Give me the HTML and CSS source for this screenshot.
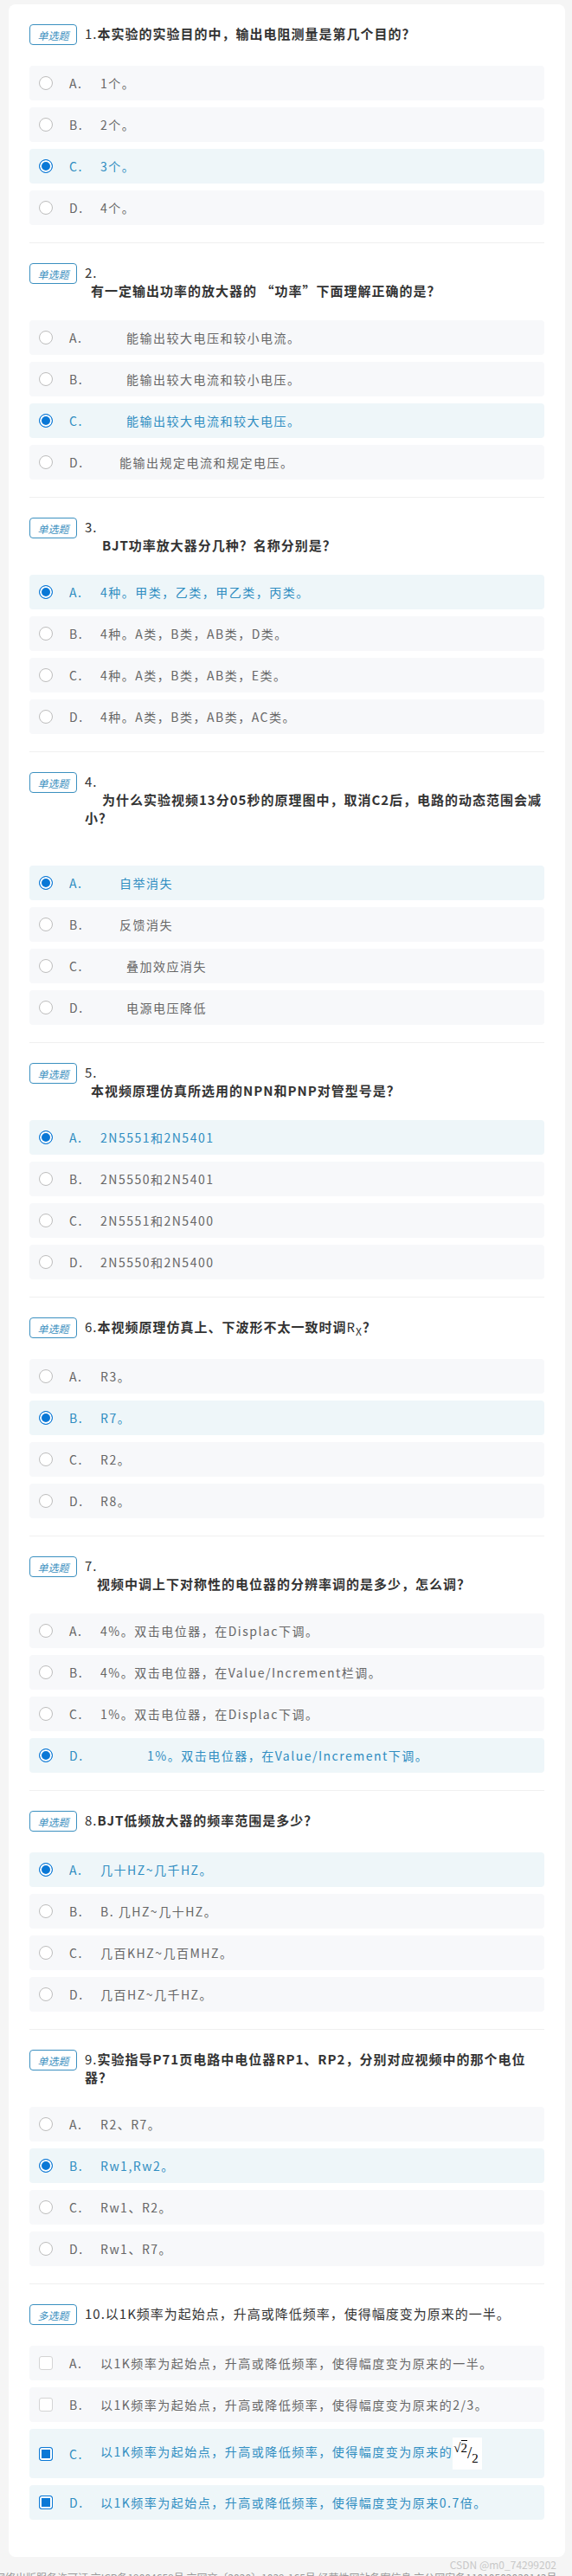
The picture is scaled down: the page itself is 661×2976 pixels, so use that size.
FILE: index.html
```html
<!DOCTYPE html>
<html lang="zh-CN">
  <head>
    <meta charset="UTF-8" />
    <meta name="viewport" content="width=device-width, initial-scale=1.0" />
    <title>课后测验</title>
    <link rel="stylesheet" href="styles.css">
  </head>
  <body>
    <div class="paper">
      <!-- 1 -->
      <div class="question">
        <div class="q-head">
          <span class="q-type">单选题</span>
          <div class="q-title"><p>1.<strong>本实验的实验目的中，输出电阻测量是第几个目的？</strong></p></div>
        </div>
        <ul class="options">
          <li class="option"><span class="radio"></span><span class="opt-key">A.</span><span class="opt-text">1个。</span></li>
          <li class="option"><span class="radio"></span><span class="opt-key">B.</span><span class="opt-text">2个。</span></li>
          <li class="option checked"><span class="radio"></span><span class="opt-key">C.</span><span class="opt-text">3个。</span></li>
          <li class="option"><span class="radio"></span><span class="opt-key">D.</span><span class="opt-text">4个。</span></li>
        </ul>
      </div>

      <!-- 2 -->
      <div class="question">
        <div class="q-head">
          <span class="q-type">单选题</span>
          <div class="q-title">
            <p>2.</p>
            <p class="indent-1"><strong>有一定输出功率的放大器的 “功率”下面理解正确的是？</strong></p>
          </div>
        </div>
        <ul class="options">
          <li class="option"><span class="radio"></span><span class="opt-key">A.</span><span class="opt-text lead-b">能输出较大电压和较小电流。</span></li>
          <li class="option"><span class="radio"></span><span class="opt-key">B.</span><span class="opt-text lead-b">能输出较大电流和较小电压。</span></li>
          <li class="option checked"><span class="radio"></span><span class="opt-key">C.</span><span class="opt-text lead-b">能输出较大电流和较大电压。</span></li>
          <li class="option"><span class="radio"></span><span class="opt-key">D.</span><span class="opt-text lead-a">能输出规定电流和规定电压。</span></li>
        </ul>
      </div>

      <!-- 3 -->
      <div class="question">
        <div class="q-head">
          <span class="q-type">单选题</span>
          <div class="q-title">
            <p>3.</p>
            <p class="indent-3"><strong>BJT功率放大器分几种？名称分别是？</strong></p>
          </div>
        </div>
        <ul class="options">
          <li class="option checked"><span class="radio"></span><span class="opt-key">A.</span><span class="opt-text">4种。甲类，乙类，甲乙类，丙类。</span></li>
          <li class="option"><span class="radio"></span><span class="opt-key">B.</span><span class="opt-text">4种。A类，B类，AB类，D类。</span></li>
          <li class="option"><span class="radio"></span><span class="opt-key">C.</span><span class="opt-text">4种。A类，B类，AB类，E类。</span></li>
          <li class="option"><span class="radio"></span><span class="opt-key">D.</span><span class="opt-text">4种。A类，B类，AB类，AC类。</span></li>
        </ul>
      </div>

      <!-- 4 -->
      <div class="question">
        <div class="q-head">
          <span class="q-type">单选题</span>
          <div class="q-title">
            <p>4.</p>
            <p class="indent-3"><strong>为什么实验视频13分05秒的原理图中，取消C2后，电路的动态范围会减<br>小？</strong></p>
            <p><br></p>
          </div>
        </div>
        <ul class="options">
          <li class="option checked"><span class="radio"></span><span class="opt-key">A.</span><span class="opt-text lead-a">自举消失</span></li>
          <li class="option"><span class="radio"></span><span class="opt-key">B.</span><span class="opt-text lead-a">反馈消失</span></li>
          <li class="option"><span class="radio"></span><span class="opt-key">C.</span><span class="opt-text lead-b">叠加效应消失</span></li>
          <li class="option"><span class="radio"></span><span class="opt-key">D.</span><span class="opt-text lead-b">电源电压降低</span></li>
        </ul>
      </div>

      <!-- 5 -->
      <div class="question">
        <div class="q-head">
          <span class="q-type">单选题</span>
          <div class="q-title">
            <p>5.</p>
            <p class="indent-1"><strong>本视频原理仿真所选用的NPN和PNP对管型号是？</strong></p>
          </div>
        </div>
        <ul class="options">
          <li class="option checked"><span class="radio"></span><span class="opt-key">A.</span><span class="opt-text">2N5551和2N5401</span></li>
          <li class="option"><span class="radio"></span><span class="opt-key">B.</span><span class="opt-text">2N5550和2N5401</span></li>
          <li class="option"><span class="radio"></span><span class="opt-key">C.</span><span class="opt-text">2N5551和2N5400</span></li>
          <li class="option"><span class="radio"></span><span class="opt-key">D.</span><span class="opt-text">2N5550和2N5400</span></li>
        </ul>
      </div>

      <!-- 6 -->
      <div class="question">
        <div class="q-head">
          <span class="q-type">单选题</span>
          <div class="q-title"><p>6.<strong>本视频原理仿真上、下波形不太一致时调</strong>R<sub>X</sub><strong>？</strong></p></div>
        </div>
        <ul class="options">
          <li class="option"><span class="radio"></span><span class="opt-key">A.</span><span class="opt-text">R3。</span></li>
          <li class="option checked"><span class="radio"></span><span class="opt-key">B.</span><span class="opt-text">R7。</span></li>
          <li class="option"><span class="radio"></span><span class="opt-key">C.</span><span class="opt-text">R2。</span></li>
          <li class="option"><span class="radio"></span><span class="opt-key">D.</span><span class="opt-text">R8。</span></li>
        </ul>
      </div>

      <!-- 7 -->
      <div class="question">
        <div class="q-head">
          <span class="q-type">单选题</span>
          <div class="q-title">
            <p>7.</p>
            <p class="indent-2"><strong>视频中调上下对称性的电位器的分辨率调的是多少，怎么调？</strong></p>
          </div>
        </div>
        <ul class="options">
          <li class="option"><span class="radio"></span><span class="opt-key">A.</span><span class="opt-text">4%。双击电位器，在Displac下调。</span></li>
          <li class="option"><span class="radio"></span><span class="opt-key">B.</span><span class="opt-text">4%。双击电位器，在Value/Increment栏调。</span></li>
          <li class="option"><span class="radio"></span><span class="opt-key">C.</span><span class="opt-text">1%。双击电位器，在Displac下调。</span></li>
          <li class="option checked"><span class="radio"></span><span class="opt-key">D.</span><span class="opt-text lead-c">1%。双击电位器，在Value/Increment下调。</span></li>
        </ul>
      </div>

      <!-- 8 -->
      <div class="question">
        <div class="q-head">
          <span class="q-type">单选题</span>
          <div class="q-title"><p>8.<strong>BJT低频放大器的频率范围是多少？</strong></p></div>
        </div>
        <ul class="options">
          <li class="option checked"><span class="radio"></span><span class="opt-key">A.</span><span class="opt-text">几十HZ~几千HZ。</span></li>
          <li class="option"><span class="radio"></span><span class="opt-key">B.</span><span class="opt-text">B. 几HZ~几十HZ。</span></li>
          <li class="option"><span class="radio"></span><span class="opt-key">C.</span><span class="opt-text">几百KHZ~几百MHZ。</span></li>
          <li class="option"><span class="radio"></span><span class="opt-key">D.</span><span class="opt-text">几百HZ~几千HZ。</span></li>
        </ul>
      </div>

      <!-- 9 -->
      <div class="question">
        <div class="q-head">
          <span class="q-type">单选题</span>
          <div class="q-title"><p>9.<strong>实验指导P71页电路中电位器RP1、RP2，分别对应视频中的那个电位<br>器？</strong></p></div>
        </div>
        <ul class="options">
          <li class="option"><span class="radio"></span><span class="opt-key">A.</span><span class="opt-text">R2、R7。</span></li>
          <li class="option checked"><span class="radio"></span><span class="opt-key">B.</span><span class="opt-text">Rw1,Rw2。</span></li>
          <li class="option"><span class="radio"></span><span class="opt-key">C.</span><span class="opt-text">Rw1、R2。</span></li>
          <li class="option"><span class="radio"></span><span class="opt-key">D.</span><span class="opt-text">Rw1、R7。</span></li>
        </ul>
      </div>

      <!-- 10 -->
      <div class="question">
        <div class="q-head">
          <span class="q-type">多选题</span>
          <div class="q-title"><p>10.以1K频率为起始点，升高或降低频率，使得幅度变为原来的一半。</p></div>
        </div>
        <ul class="options">
          <li class="option"><span class="check"></span><span class="opt-key">A.</span><span class="opt-text">以1K频率为起始点，升高或降低频率，使得幅度变为原来的一半。</span></li>
          <li class="option"><span class="check"></span><span class="opt-key">B.</span><span class="opt-text">以1K频率为起始点，升高或降低频率，使得幅度变为原来的2/3。</span></li>
          <li class="option checked"><span class="check"></span><span class="opt-key">C.</span><span class="opt-text">以1K频率为起始点，升高或降低频率，使得幅度变为原来的<span class="formula"><span class="radical">√<span class="radicand">2</span></span><span class="slash">/</span><span class="denom">2</span></span></span></li>
          <li class="option checked"><span class="check"></span><span class="opt-key">D.</span><span class="opt-text">以1K频率为起始点，升高或降低频率，使得幅度变为原来0.7倍。</span></li>
        </ul>
      </div>
    </div>

    <div class="watermark">CSDN @m0_74299202</div>
    <div class="site-info">网络出版服务许可证 京ICP备19004658号 京网文〔2020〕1039-165号 经营性网站备案信息 京公网安备11010502030143号</div>
  </body>
</html>
```

FILE: styles.css
```css
body {
  margin: 0;
  padding: 0;
  background-color: #f5f5f5;
  font-family: "Noto Sans CJK SC", "Microsoft YaHei", sans-serif;
  color: #333;
}

.paper {
  margin: 5px 8px 0 10px;
  padding: 0 24px 23px;
  background-color: #fff;
  border-radius: 8px;
}

.question {
  padding: 23px 0 20px;
  border-bottom: 1px solid #f0f0f0;
}

.question:last-child {
  border-bottom: none;
}

.q-head {
  display: flex;
  align-items: flex-start;
  gap: 9px;
  margin-bottom: 24px;
}

.q-type {
  flex: none;
  width: 55px;
  height: 24px;
  box-sizing: border-box;
  border: 1px solid #3b90c0;
  border-radius: 4px;
  color: #3b90c0;
  font-size: 12px;
  font-style: italic;
  display: flex;
  align-items: center;
  justify-content: center;
}

.q-title {
  flex: 1;
  font-size: 15px;
  line-height: 21px;
  letter-spacing: 1px;
  color: #333;
}

.q-title p {
  margin: 0;
}

.q-title strong {
  font-weight: 700;
}

.q-title sub {
  font-size: 12px;
  line-height: 0;
  vertical-align: -4px;
}

.indent-1 {
  text-indent: 7px;
}

.indent-2 {
  text-indent: 14px;
}

.indent-3 {
  text-indent: 20px;
}

.options {
  list-style: none;
  margin: 0;
  padding: 0;
  display: flex;
  flex-direction: column;
  gap: 8px;
}

.option {
  display: flex;
  align-items: center;
  min-height: 40px;
  box-sizing: border-box;
  padding: 10px 11px;
  background-color: #f7f8fa;
  border-radius: 4px;
  font-size: 14px;
  line-height: 20px;
  letter-spacing: 1.5px;
  color: #666;
}

.option.checked {
  background-color: #eef6f9;
  color: #2f8dc1;
}

.radio,
.check {
  flex: none;
  width: 16px;
  height: 16px;
  box-sizing: border-box;
  border: 1px solid #bdbdbd;
  background-color: #fff;
  margin-right: 19px;
}

.radio {
  border-radius: 50%;
}

.check {
  border-radius: 3px;
  border-color: #d4d4d4;
}

.checked .radio,
.checked .check {
  border: 1.5px solid #0a78d6;
  background-color: #0a78d6;
  box-shadow: inset 0 0 0 2px #fff;
}

.opt-key {
  flex: none;
  width: 36px;
}

.lead-a {
  padding-left: 22px;
}

.lead-b {
  padding-left: 30px;
}

.lead-c {
  padding-left: 54px;
}

.formula {
  display: inline-block;
  vertical-align: middle;
  width: 34px;
  height: 37px;
  box-sizing: border-box;
  padding: 3px 0 0 1px;
  background-color: #fff;
  color: #000;
  font-family: "Liberation Serif", serif;
  font-size: 15px;
  line-height: 18px;
  letter-spacing: 0;
  white-space: nowrap;
}

.radical {
  display: inline-block;
  vertical-align: top;
}

.radicand {
  border-top: 1px solid #000;
}

.slash {
  display: inline-block;
  font-size: 19px;
  vertical-align: -7px;
}

.denom {
  display: inline-block;
  vertical-align: -12px;
}

.watermark {
  margin-top: 2px;
  padding-right: 18px;
  height: 14px;
  text-align: right;
  font-size: 12px;
  line-height: 14px;
  color: #c8c8c8;
}

.site-info {
  margin-top: 1px;
  height: 5px;
  overflow: hidden;
  font-size: 12px;
  line-height: 14px;
  color: #999;
  white-space: nowrap;
  margin-left: -6px;
}
```
